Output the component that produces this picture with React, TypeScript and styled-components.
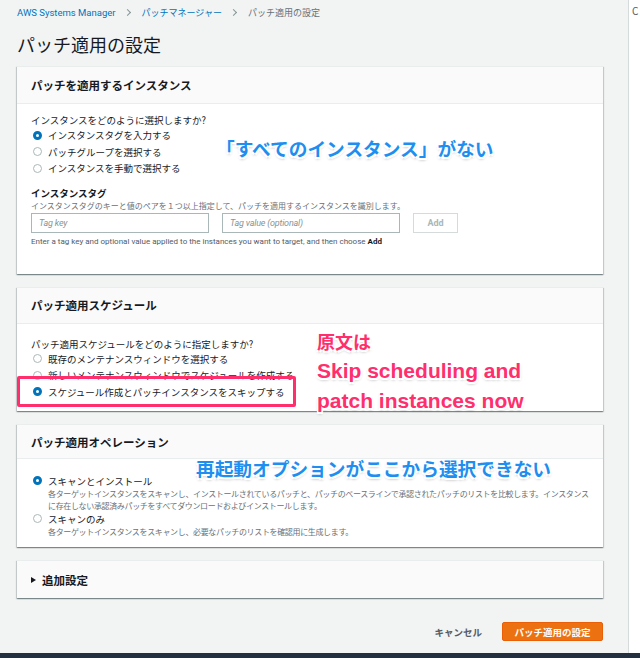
import styled, { createGlobalStyle } from "styled-components";

const GlobalStyle = createGlobalStyle`
  html, body {
    margin: 0;
    padding: 0;
    background: #f2f3f3;
    font-family: "Noto Sans CJK JP", "Noto Sans", sans-serif;
    color: #16191f;
  }
  * { box-sizing: border-box; }
`;

const Shell = styled.div`
  position: relative;
  width: 640px;
  height: 658px;
  overflow: hidden;
  display: grid;
  grid-template-columns: 628px 12px;
  grid-template-rows: 653px 5px;
`;

const Main = styled.main`
  padding: 5px 25px 0 17px;
  display: flex;
  flex-direction: column;
`;

const SidePanel = styled.aside`
  background: #fff;
  border-left: 1px solid #d5dbdb;
  padding: 3px 0 0 3px;
  font-size: 10px;
  color: #545b64;
  overflow: hidden;
  white-space: nowrap;
`;

const BottomBar = styled.div`
  grid-column: 1 / 3;
  background: #232f3e;
`;

const Breadcrumbs = styled.nav`
  display: flex;
  align-items: center;
  gap: 9px;
  height: 14px;
`;

const Crumb = styled.span<{ $current?: boolean; $latin?: boolean }>`
  color: ${(p) => (p.$current ? "#687078" : "#0073bb")};
  font-family: ${(p) => (p.$latin ? "Roboto, sans-serif" : "inherit")};
  font-size: ${(p) => (p.$latin ? "9.5px" : "9px")};
`;

const CrumbSep = styled.span`
  width: 5px;
  height: 5px;
  border-top: 1px solid #879596;
  border-right: 1px solid #879596;
  transform: rotate(45deg);
  margin-right: 3px;
`;

const PageTitle = styled.h1`
  margin: 13px 0 10px;
  font-size: 18px;
  line-height: 24px;
  font-weight: 400;
  color: #16191f;
`;

const Card = styled.section`
  background: #fff;
  box-shadow: 0 1px 1px 0 rgba(0, 28, 36, 0.3), 1px 1px 1px 0 rgba(0, 28, 36, 0.15),
    -1px 1px 1px 0 rgba(0, 28, 36, 0.15);
  border-top: 1px solid #eaeded;
  margin-bottom: 13px;
`;

const CardHeader = styled.header<{ $h?: number }>`
  height: ${(p) => p.$h ?? 36}px;
  background: #fafafa;
  border-bottom: 1px solid #eaeded;
  display: flex;
  align-items: center;
  padding: 0 14px;
  font-size: 11.5px;
  font-weight: 700;
  color: #16191f;
`;

const CardBody = styled.div<{ $pt: number; $pb: number }>`
  padding: ${(p) => p.$pt}px 14px ${(p) => p.$pb}px;
  display: flex;
  flex-direction: column;
`;

const Question = styled.div`
  font-size: 9.5px;
  line-height: 14px;
  color: #16191f;
`;

const RadioRow = styled.label<{ $h?: number }>`
  display: flex;
  align-items: center;
  gap: 6px;
  height: ${(p) => p.$h ?? 16.5}px;
  font-size: 9.5px;
  color: #16191f;
  padding-left: 2px;
`;

const RadioDot = styled.span<{ $on?: boolean }>`
  width: 9px;
  height: 9px;
  border-radius: 50%;
  flex: none;
  background: #fff;
  border: ${(p) => (p.$on ? "3px solid #0073bb" : "1px solid #aab7b8")};
`;

const OptionBlock = styled.div<{ $gap?: number }>`
  display: flex;
  flex-direction: column;
  margin-top: ${(p) => p.$gap ?? 0}px;
`;

const OptionHint = styled.div`
  padding-left: 17px;
  margin-right: -8px;
  font-size: 8px;
  line-height: 12px;
  letter-spacing: -0.35px;
  color: #687078;
`;

const FieldLabel = styled.div`
  margin-top: 9px;
  font-size: 9.5px;
  line-height: 14px;
  font-weight: 700;
`;

const FieldHint = styled.div`
  font-size: 8px;
  line-height: 12px;
  color: #687078;
`;

const TagInputs = styled.div`
  display: flex;
  gap: 13px;
  margin-top: 1px;
`;

const TextInput = styled.div<{ $w: number }>`
  width: ${(p) => p.$w}px;
  height: 20px;
  border: 1px solid #aab7b8;
  background: #fff;
  display: flex;
  align-items: center;
  padding-left: 7px;
  font-family: Roboto, sans-serif;
  font-style: italic;
  font-size: 9px;
  color: #879596;
  letter-spacing: -0.2px;
`;

const GhostButton = styled.div`
  width: 45px;
  height: 20px;
  border: 1px solid #d5dbdb;
  display: flex;
  align-items: center;
  justify-content: center;
  font-family: Roboto, sans-serif;
  font-weight: 700;
  font-size: 9px;
  color: #aab7b8;
`;

const HelpText = styled.div`
  margin-top: 3px;
  font-family: Roboto, sans-serif;
  font-size: 8px;
  line-height: 12px;
  color: #545b64;

  b {
    color: #16191f;
  }
`;

const Expander = styled(CardHeader)`
  border-bottom: none;
  gap: 6px;
`;

const Caret = styled.span`
  width: 0;
  height: 0;
  border-top: 3.5px solid transparent;
  border-bottom: 3.5px solid transparent;
  border-left: 5px solid #16191f;
`;

const Actions = styled.div`
  display: flex;
  justify-content: flex-end;
  align-items: center;
  gap: 20px;
  margin-top: 11px;
`;

const LinkButton = styled.span`
  font-size: 9.5px;
  font-weight: 700;
  color: #545b64;
`;

const PrimaryButton = styled.span`
  width: 101px;
  height: 19px;
  background: #ec7211;
  border: 1px solid #eb5f07;
  border-radius: 2px;
  display: flex;
  align-items: center;
  justify-content: center;
  font-size: 9.5px;
  font-weight: 700;
  color: #fff;
`;

/* callouts drawn on top of the form */
const Callout = styled.div<{ $x: number; $y: number; $tone: "blue" | "pink" }>`
  position: absolute;
  left: ${(p) => p.$x}px;
  top: ${(p) => p.$y}px;
  font-family: "Noto Sans CJK JP", "Liberation Sans", sans-serif;
  font-weight: 700;
  font-size: ${(p) => (p.$tone === "blue" ? 18.7 : 18)}px;
  line-height: 30px;
  white-space: nowrap;
  color: ${(p) => (p.$tone === "blue" ? "#1e8ff0" : "#ff2f6e")};
  text-shadow: -1.5px -1.5px 0 #fff, 1.5px -1.5px 0 #fff, -1.5px 1.5px 0 #fff,
    1.5px 1.5px 0 #fff, 0 2px 3px rgba(0, 0, 0, 0.35);
`;

const LatinLine = styled.div`
  font-family: "Liberation Sans", Arial, sans-serif;
  font-size: 21px;
`;

const Highlight = styled.div`
  position: absolute;
  left: 17px;
  top: 376px;
  width: 279px;
  height: 31px;
  border: 3px solid #ff2f6e;
  border-radius: 2px;
`;

export default function App() {
  return (
    <>
      <GlobalStyle />
      <Shell>
        <Main>
          <Breadcrumbs>
            <Crumb $latin>AWS Systems Manager</Crumb>
            <CrumbSep />
            <Crumb>パッチマネージャー</Crumb>
            <CrumbSep />
            <Crumb $current>パッチ適用の設定</Crumb>
          </Breadcrumbs>
          <PageTitle>パッチ適用の設定</PageTitle>

          <Card>
            <CardHeader $h={37}>パッチを適用するインスタンス</CardHeader>
            <CardBody $pt={9} $pb={26}>
              <Question>インスタンスをどのように選択しますか?</Question>
              <RadioRow>
                <RadioDot $on />
                インスタンスタグを入力する
              </RadioRow>
              <RadioRow>
                <RadioDot />
                パッチグループを選択する
              </RadioRow>
              <RadioRow>
                <RadioDot />
                インスタンスを手動で選択する
              </RadioRow>
              <FieldLabel>インスタンスタグ</FieldLabel>
              <FieldHint>
                インスタンスタグのキーと値のペアを１つ以上指定して、パッチを適用するインスタンスを識別します。
              </FieldHint>
              <TagInputs>
                <TextInput $w={178}>Tag key</TextInput>
                <TextInput $w={178}>Tag value (optional)</TextInput>
                <GhostButton>Add</GhostButton>
              </TagInputs>
              <HelpText>
                Enter a tag key and optional value applied to the instances you want to target, and
                then choose <b>Add</b>
              </HelpText>
            </CardBody>
          </Card>

          <Card>
            <CardHeader>パッチ適用スケジュール</CardHeader>
            <CardBody $pt={13} $pb={11}>
              <Question>パッチ適用スケジュールをどのように指定しますか?</Question>
              <RadioRow>
                <RadioDot />
                既存のメンテナンスウィンドウを選択する
              </RadioRow>
              <RadioRow>
                <RadioDot />
                新しいメンテナンスウィンドウでスケジュールを作成する
              </RadioRow>
              <RadioRow>
                <RadioDot $on />
                スケジュール作成とパッチインスタンスをスキップする
              </RadioRow>
            </CardBody>
          </Card>

          <Card>
            <CardHeader $h={34}>パッチ適用オペレーション</CardHeader>
            <CardBody $pt={14} $pb={9}>
              <OptionBlock>
                <RadioRow $h={15}>
                  <RadioDot $on />
                  スキャンとインストール
                </RadioRow>
                <OptionHint>
                  各ターゲットインスタンスをスキャンし、インストールされているパッチと、パッチのベースラインで承認されたパッチのリストを比較します。インスタンス
                  <br />
                  に存在しない承認済みパッチをすべてダウンロードおよびインストールします。
                </OptionHint>
              </OptionBlock>
              <OptionBlock $gap={-1}>
                <RadioRow $h={15}>
                  <RadioDot />
                  スキャンのみ
                </RadioRow>
                <OptionHint>各ターゲットインスタンスをスキャンし、必要なパッチのリストを確認用に生成します。</OptionHint>
              </OptionBlock>
            </CardBody>
          </Card>

          <Card>
            <Expander $h={37}>
              <Caret />
              追加設定
            </Expander>
          </Card>

          <Actions>
            <LinkButton>キャンセル</LinkButton>
            <PrimaryButton>パッチ適用の設定</PrimaryButton>
          </Actions>
        </Main>
        <SidePanel>C</SidePanel>
        <BottomBar />

        <Callout $tone="blue" $x={216} $y={133}>
          「すべてのインスタンス」がない
        </Callout>
        <Highlight />
        <Callout $tone="pink" $x={317} $y={326}>
          原文は
          <LatinLine>Skip scheduling and</LatinLine>
          <LatinLine>patch instances now</LatinLine>
        </Callout>
        <Callout $tone="blue" $x={196} $y={453}>
          再起動オプションがここから選択できない
        </Callout>
      </Shell>
    </>
  );
}
